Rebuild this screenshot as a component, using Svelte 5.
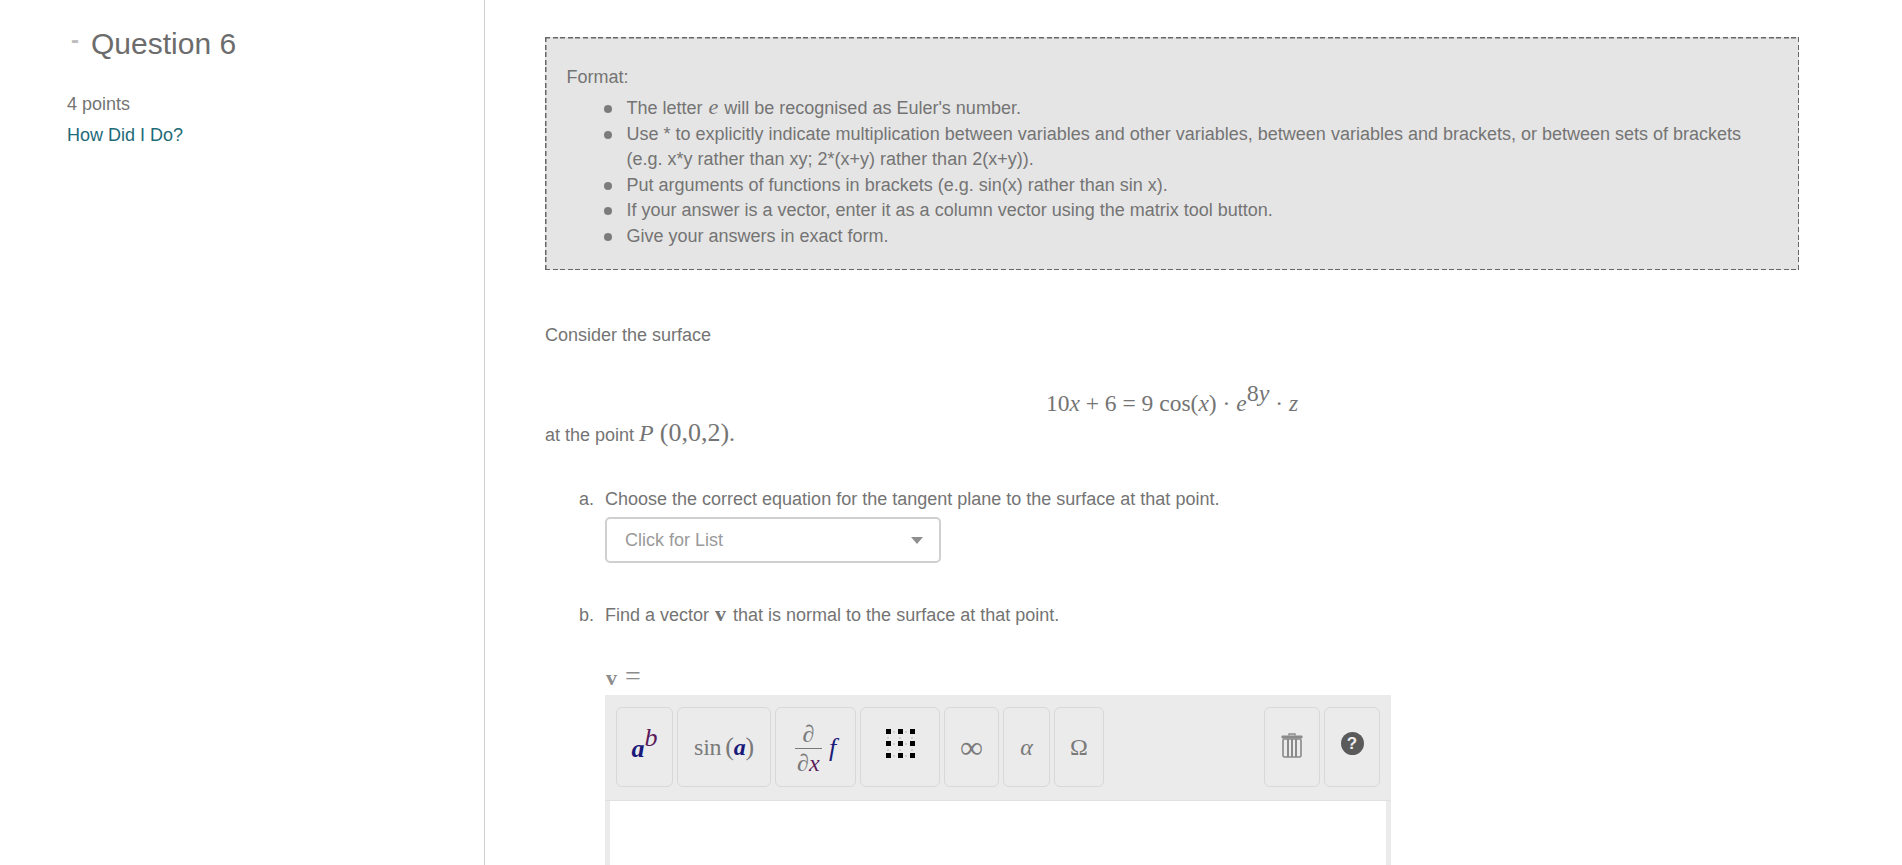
<script>
	const hints = [
		['The letter ', "e", " will be recognised as Euler's number."],
		['Use * to explicitly indicate multiplication between variables and other variables, between variables and brackets, or between sets of brackets (e.g. x*y rather than xy; 2*(x+y) rather than 2(x+y)).'],
		['Put arguments of functions in brackets (e.g. sin(x) rather than sin x).'],
		['If your answer is a vector, enter it as a column vector using the matrix tool button.'],
		['Give your answers in exact form.']
	];
	// 5x5: black squares on the even crossings, faint ticks between them
	const cells = Array.from({ length: 25 }, (_, i) => {
		const r = Math.floor(i / 5) % 2;
		const c = i % 5 % 2;
		return r + c === 0 ? 'dot' : r + c === 1 ? 'tick' : '';
	});
</script>

<div class="page">
	<aside class="side">
		<h2><span class="toggle">-</span>Question 6</h2>
		<p class="points">4 points</p>
		<a class="how" href="#how">How Did I Do?</a>
	</aside>

	<main class="main">
		<section class="format">
			<p>Format:</p>
			<ul>
				{#each hints as h}
					<li>{h[0]}{#if h[1]}<i class="math">{h[1]}</i>{h[2]}{/if}</li>
				{/each}
			</ul>
		</section>

		<p class="consider">Consider the surface</p>
		<div class="equation">
			10<i>x</i> + 6 = 9 cos(<i>x</i>) · <i>e</i><sup>8<i>y</i></sup> · <i>z</i>
		</div>
		<p class="at">at the point <span class="inline-math"><i>P</i> <span class="big">(0,0,2)</span>.</span></p>

		<ol class="parts">
			<li class="part-a">
				<span class="marker">a.</span>
				<div>
					<p>Choose the correct equation for the tangent plane to the surface at that point.</p>
					<div class="select">
						<span class="placeholder">Click for List</span>
						<span class="caret"></span>
					</div>
				</div>
			</li>
			<li class="part-b">
				<span class="marker">b.</span>
				<div>
					<p>Find a vector <b class="vec">v</b> that is normal to the surface at that point.</p>
					<p class="v-eq"><b class="vec">v</b> <span class="eq">=</span></p>
					<div class="editor">
						<div class="toolbar">
							<button class="w57"><span class="power"><i class="navy">a</i><sup><i class="plum">b</i></sup></span></button>
							<button class="w94"><span class="sin">sin <span class="paren">(</span><i class="navy">a</i><span class="paren">)</span></span></button>
							<button class="w81 deriv">
								<span class="frac"><span class="num">∂</span><span class="den">∂<i class="plum">x</i></span></span>
								<i class="navy f">f</i>
							</button>
							<button class="w80 matrix" aria-label="Matrix">
								<span class="grid">{#each cells as cell}<span class={cell}></span>{/each}</span>
							</button>
							<button class="w55 inf">∞</button>
							<button class="w47"><i>α</i></button>
							<button class="w50">Ω</button>
							<span class="spacer"></span>
							<button class="w56 trash" aria-label="Clear">
								<svg width="22" height="25" viewBox="0 0 22 25">
									<path d="M8 2.5V1h6v1.5" fill="none" stroke="#8a8a8a" stroke-width="1.4" />
									<rect x="0.5" y="2.5" width="21" height="3" rx="1" fill="#8a8a8a" />
									<rect x="2" y="6" width="18" height="18" rx="1.5" fill="none" stroke="#8a8a8a" stroke-width="1.6" />
									<path d="M7 6v18M11 6v18M15 6v18" stroke="#8a8a8a" stroke-width="2" />
								</svg>
							</button>
							<button class="w56 helpbtn" aria-label="Help">
								<span class="help">?</span>
							</button>
						</div>
						<div class="input"></div>
					</div>
				</div>
			</li>
		</ol>
	</main>
</div>

<style>
	:global(body) {
		margin: 0;
		background: #fff;
		overflow: hidden;
	}
	.page {
		display: flex;
		height: 865px;
		overflow: hidden;
		font-family: 'Liberation Sans', Arial, sans-serif;
		font-size: 18px;
		line-height: 25.5px;
		color: #747474;
	}
	p {
		margin: 0;
	}
	.side {
		width: 485px;
		flex: none;
		box-sizing: border-box;
		border-right: 1px solid #cfcfcf;
		padding: 24px 0 0 67px;
	}
	h2 {
		margin: 0 0 27.5px;
		font-size: 30px;
		line-height: 40px;
		font-weight: 400;
		color: #6c6c6c;
		display: flex;
	}
	.toggle {
		width: 20px;
		margin-left: 4px;
		color: #bdbdbd;
		font-size: 24px;
		font-weight: 700;
		line-height: 32px;
	}
	.points {
		margin-bottom: 6px;
	}
	.how {
		color: #1d6a78;
		text-decoration: none;
	}
	.main {
		flex: 1;
		min-width: 0;
		padding: 37px 103px 0 60px;
	}
	.format {
		box-sizing: border-box;
		height: 233px;
		padding: 27.5px 21px 0 21.5px;
		background-color: #e5e5e5;
		background-image:
			repeating-linear-gradient(90deg, #666 0 5px, transparent 5px 7.6px),
			repeating-linear-gradient(90deg, #666 0 5px, transparent 5px 7.6px),
			repeating-linear-gradient(0deg, #666 0 5px, transparent 5px 7.6px),
			repeating-linear-gradient(0deg, #666 0 5px, transparent 5px 7.6px);
		background-size: 100% 1.5px, 100% 1.5px, 1.5px 100%, 1.5px 100%;
		background-position: 0 0, 0 100%, 0 0, 100% 0;
		background-repeat: no-repeat;
	}
	.format ul {
		list-style: none;
		margin: 6px 0 0;
		padding: 0 0 0 60px;
	}
	.format li {
		position: relative;
	}
	.format li::before {
		content: '';
		position: absolute;
		left: -23px;
		top: 9px;
		width: 8px;
		height: 8px;
		border-radius: 50%;
		background: #7c7c7c;
	}
	.math {
		font-family: 'Liberation Serif', serif;
		font-size: 22px;
		line-height: 0;
		padding: 0 1px;
	}
	.consider {
		margin-top: 53px;
	}
	.equation {
		margin-top: 38.4px;
		height: 32.2px;
		text-align: center;
		font-family: 'Liberation Serif', serif;
		font-size: 23.5px;
		line-height: 32px;
		white-space: pre-wrap;
	}
	.equation sup {
		font-size: 24px;
		line-height: 0;
		vertical-align: 10px;
	}
	.at {
		padding-top: 1px;
	}
	.inline-math {
		font-family: 'Liberation Serif', serif;
		font-size: 24px;
		line-height: 25px;
	}
	.big {
		font-size: 26px;
	}
	.parts {
		list-style: none;
		margin: 38px 0 0;
		padding: 0 0 0 34px;
	}
	.parts > li {
		display: flex;
	}
	.marker {
		width: 26px;
		flex: none;
	}
	.part-b {
		margin-top: 39.5px;
	}
	.select {
		box-sizing: border-box;
		margin-top: 5px;
		width: 336px;
		height: 46px;
		border: 2px solid #d0d0d0;
		border-radius: 5px;
		padding: 0 16px 0 18px;
		display: flex;
		align-items: center;
		justify-content: space-between;
		color: #9a9a9a;
	}
	.placeholder {
		padding-top: 2px;
	}
	.caret {
		border: 6px solid transparent;
		border-top: 7px solid #8f8f8f;
		border-bottom: 0;
	}
	.vec {
		font-family: 'Liberation Serif', serif;
		font-size: 22px;
		line-height: 0;
		padding: 0 2px 0 1px;
	}
	.v-eq {
		margin-top: 34.5px;
		color: #8c8c8c;
		font-family: 'Liberation Serif', serif;
		font-size: 24px;
	}
	.eq {
		font-size: 28px;
	}
	.editor {
		margin-top: 5px;
		width: 786px;
		background: #ebebeb;
		padding: 0 5px;
		box-sizing: border-box;
	}
	.toolbar {
		box-sizing: border-box;
		height: 106px;
		margin: 0 -5px;
		padding: 12px 11px 0 11px;
		display: flex;
		align-items: flex-start;
		gap: 4px;
		border-bottom: 1px solid #e0e0e0;
	}
	.toolbar button {
		box-sizing: border-box;
		height: 80px;
		flex: none;
		padding: 0;
		background: #ebebeb;
		border: 1.5px solid #d8d8d8;
		border-radius: 6px;
		color: #7a7a7a;
		font-family: 'Liberation Serif', serif;
		font-size: 24px;
		display: flex;
		align-items: center;
		justify-content: center;
	}
	.w47 { width: 47px; }
	.w50 { width: 50px; }
	.w55 { width: 55px; }
	.w56 { width: 56px; }
	.w57 { width: 57px; }
	.w80 { width: 80px; }
	.w81 { width: 81px; }
	.w94 { width: 94px; }
	.spacer {
		flex: 1;
	}
	.navy {
		color: #1a1a7a;
		font-weight: 700;
	}
	.plum {
		color: #5a1a5a;
	}
	.power {
		font-size: 26px;
		padding-top: 4px;
	}
	.power sup {
		font-size: 26px;
		line-height: 0;
		vertical-align: 11px;
	}
	.sin {
		letter-spacing: -0.2px;
		word-spacing: -2px;
	}
	.paren {
		font-size: 26px;
	}
	.deriv {
		gap: 7px;
		padding-top: 2px !important;
	}
	.frac {
		display: flex;
		flex-direction: column;
		align-items: center;
		line-height: 28px;
	}
	.num {
		border-bottom: 1.5px solid #7a7a7a;
		width: 27px;
		text-align: center;
	}
	.f {
		font-size: 26px;
		font-weight: 400;
	}
	.inf {
		font-size: 32px !important;
	}
	.matrix {
		padding-bottom: 7px !important;
	}
	.grid {
		display: grid;
		grid-template-columns: repeat(5, 5px);
		grid-auto-rows: 5px;
		gap: 1px;
	}
	.dot {
		background: #000;
	}
	.tick {
		width: 2px;
		height: 2px;
		margin: auto;
		background: #cfcfcf;
	}
	.trash {
		padding-bottom: 3px !important;
	}
	.helpbtn {
		padding-bottom: 7px !important;
	}
	.help {
		width: 23px;
		height: 23px;
		border-radius: 50%;
		background: #5a5a5a;
		color: #eee;
		font-family: 'Liberation Sans', sans-serif;
		font-weight: 700;
		font-size: 17px;
		line-height: 23px;
		text-align: center;
	}
	.input {
		height: 80px;
		background: #fff;
	}
</style>
